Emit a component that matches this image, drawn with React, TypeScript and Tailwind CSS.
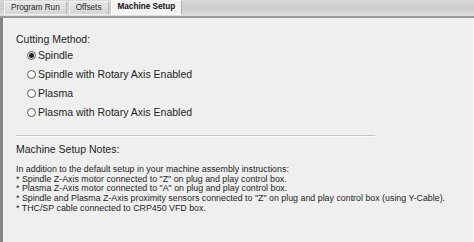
import React from "react";

const font = { fontFamily: '"Liberation Sans", Arial, sans-serif' };

function Radio({ checked, label }: { checked?: boolean; label: string }) {
  return (
    <div className="flex items-center h-[19px] pl-[11px]">
      <span className="w-[9px] h-[9px] rounded-full border border-[#5a5a5a] bg-white flex items-center justify-center">
        {checked && <span className="w-[5px] h-[5px] rounded-full bg-[#222]" />}
      </span>
      <span className="ml-[2px] text-[10.5px] leading-[13px] text-[#1e1e1e]">{label}</span>
    </div>
  );
}

export default function App() {
  return (
    <div className="w-[474px] h-[242px] bg-[#efefef] flex flex-col overflow-hidden" style={font}>
      <div className="h-[18px] flex items-end px-[4px] gap-[2px] bg-gradient-to-b from-[#d9d9d9] via-[#cdcdcd] to-[#dedede] border-b-2 border-[#999999] pb-[1px]">
        <div className="h-[14px] px-[6px] flex items-center text-[8.2px] text-[#2a2a2a] bg-gradient-to-b from-[#e6e6e6] to-[#d6d6d6] border border-[#f4f4f4] border-r-[#b8b8b8]">
          Program Run
        </div>
        <div className="h-[14px] px-[6px] flex items-center text-[8.2px] text-[#2a2a2a] bg-gradient-to-b from-[#e6e6e6] to-[#d6d6d6] border border-[#f4f4f4] border-r-[#b8b8b8]">
          Offsets
        </div>
        <div className="h-[15px] px-[6px] flex items-center text-[8.2px] font-bold text-[#111] bg-[#f3f3f3] border border-[#fafafa] border-r-[#b0b0b0]">
          Machine Setup
        </div>
      </div>
      <div className="flex-1 flex border-l-[3px] border-[#858585] border-r border-r-[#fafafa]">
        <div className="flex-1 flex flex-col pl-[13px] pt-[15px]">
          <div className="text-[10.5px] leading-[13px] text-[#1e1e1e]">Cutting Method:</div>
          <Radio checked label="Spindle" />
          <Radio label="Spindle with Rotary Axis Enabled" />
          <Radio label="Plasma" />
          <Radio label="Plasma with Rotary Axis Enabled" />
          <div className="mt-[13px] w-[359px] h-[2px] border-t border-[#c4c4c4] border-b border-b-[#fbfbfb]" />
          <div className="mt-[6px] text-[10.5px] leading-[13px] text-[#1e1e1e]">Machine Setup Notes:</div>
          <div className="mt-[9px] text-[8.85px] leading-[9.7px] text-[#1e1e1e]">
            <div>In addition to the default setup in your machine assembly instructions:</div>
            <div>* Spindle Z-Axis motor connected to "Z" on plug and play control box.</div>
            <div>* Plasma Z-Axis motor connected to "A" on plug and play control box.</div>
            <div>* Spindle and Plasma Z-Axis proximity sensors connected to "Z" on plug and play control box (using Y-Cable).</div>
            <div>* THC/SP cable connected to CRP450 VFD box.</div>
          </div>
        </div>
      </div>
    </div>
  );
}
